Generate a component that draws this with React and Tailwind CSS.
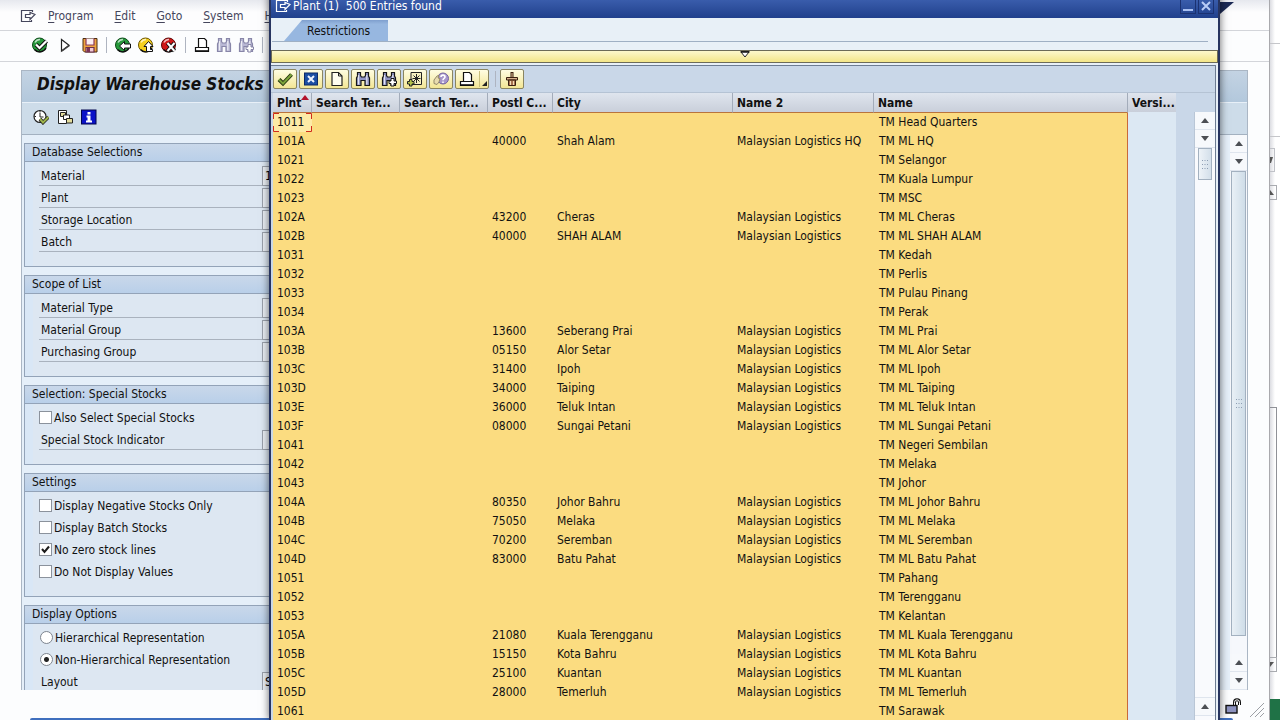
import clsx from 'clsx'

const plants = [
  ['1011', '', '', '', 'TM Head Quarters'],
  ['101A', '40000', 'Shah Alam', 'Malaysian Logistics HQ', 'TM ML HQ'],
  ['1021', '', '', '', 'TM Selangor'],
  ['1022', '', '', '', 'TM Kuala Lumpur'],
  ['1023', '', '', '', 'TM MSC'],
  ['102A', '43200', 'Cheras', 'Malaysian Logistics', 'TM ML Cheras'],
  ['102B', '40000', 'SHAH ALAM', 'Malaysian Logistics', 'TM ML SHAH ALAM'],
  ['1031', '', '', '', 'TM Kedah'],
  ['1032', '', '', '', 'TM Perlis'],
  ['1033', '', '', '', 'TM Pulau Pinang'],
  ['1034', '', '', '', 'TM Perak'],
  ['103A', '13600', 'Seberang Prai', 'Malaysian Logistics', 'TM ML Prai'],
  ['103B', '05150', 'Alor Setar', 'Malaysian Logistics', 'TM ML Alor Setar'],
  ['103C', '31400', 'Ipoh', 'Malaysian Logistics', 'TM ML Ipoh'],
  ['103D', '34000', 'Taiping', 'Malaysian Logistics', 'TM ML Taiping'],
  ['103E', '36000', 'Teluk Intan', 'Malaysian Logistics', 'TM ML Teluk Intan'],
  ['103F', '08000', 'Sungai Petani', 'Malaysian Logistics', 'TM ML Sungai Petani'],
  ['1041', '', '', '', 'TM Negeri Sembilan'],
  ['1042', '', '', '', 'TM Melaka'],
  ['1043', '', '', '', 'TM Johor'],
  ['104A', '80350', 'Johor Bahru', 'Malaysian Logistics', 'TM ML Johor Bahru'],
  ['104B', '75050', 'Melaka', 'Malaysian Logistics', 'TM ML Melaka'],
  ['104C', '70200', 'Seremban', 'Malaysian Logistics', 'TM ML Seremban'],
  ['104D', '83000', 'Batu Pahat', 'Malaysian Logistics', 'TM ML Batu Pahat'],
  ['1051', '', '', '', 'TM Pahang'],
  ['1052', '', '', '', 'TM Terengganu'],
  ['1053', '', '', '', 'TM Kelantan'],
  ['105A', '21080', 'Kuala Terengganu', 'Malaysian Logistics', 'TM ML Kuala Terengganu'],
  ['105B', '15150', 'Kota Bahru', 'Malaysian Logistics', 'TM ML Kota Bahru'],
  ['105C', '25100', 'Kuantan', 'Malaysian Logistics', 'TM ML Kuantan'],
  ['105D', '28000', 'Temerluh', 'Malaysian Logistics', 'TM ML Temerluh'],
  ['1061', '', '', '', 'TM Sarawak'],
]

const columns = [
  { title: 'Plnt', width: 'w-[39px]', sorted: true },
  { title: 'Search Ter...', width: 'w-[88px]' },
  { title: 'Search Ter...', width: 'w-[88px]' },
  { title: 'Postl C...', width: 'w-[65px]' },
  { title: 'City', width: 'w-[180px]' },
  { title: 'Name 2', width: 'w-[141px]' },
  { title: 'Name', width: '' },
  { title: 'Versi...', width: 'w-[48px]' },
]

function Icon({ children, className = 'size-4' }) {
  return (
    <svg viewBox="0 0 16 16" className={clsx('shrink-0', className)} aria-hidden="true">
      {children}
    </svg>
  )
}

function Ball({ color, dark, children }) {
  return (
    <Icon>
      <circle cx="7.5" cy="8" r="7" fill={color} stroke={dark} strokeWidth="1" />
      <path d="M3 5.5A5.5 5.5 0 0 1 8 2.5" fill="none" stroke="#fff" strokeOpacity=".7" strokeWidth="1.5" />
      <path d="M2.5 12.5A7 7 0 0 0 14 11" fill="none" stroke="#111" strokeWidth="1.4" />
      {children}
    </Icon>
  )
}

function EnterIcon() {
  return (
    <Ball color="#279a3c" dark="#0c4a18">
      <path d="M4 7.5L7.5 11L14.5 4" fill="none" stroke="#111" strokeWidth="4.2" />
      <path d="M4 7.5L7.5 11L14.5 4" fill="none" stroke="#fff" strokeWidth="2.2" />
    </Ball>
  )
}

function BackIcon() {
  return (
    <Ball color="#279a3c" dark="#0c4a18">
      <path d="M4.5 9L9.5 4.5V7H15.5V11H9.5V13.5Z" fill="#fff" stroke="#111" />
    </Ball>
  )
}

function ExitIcon() {
  return (
    <Ball color="#f5cf1e" dark="#6b5500">
      <path d="M10.5 4.5L15 9.5H12.5V12.5H14.5V14.5H8.5V9.5H6Z" fill="#fff" stroke="#111" />
    </Ball>
  )
}

function CancelIcon() {
  return (
    <Ball color="#d01818" dark="#5c0606">
      <path d="M6.5 6L13.5 14M13.5 6L6.5 14" stroke="#111" strokeWidth="4" />
      <path d="M6.5 6L13.5 14M13.5 6L6.5 14" stroke="#fff" strokeWidth="2" />
    </Ball>
  )
}

function PlayIcon() {
  return (
    <Icon>
      <path d="M4.5 2.5V14L12 8.2Z" fill="#fff" stroke="#222" strokeWidth="1.2" />
      <path d="M5 14L12.5 8.5" stroke="#444" strokeWidth="1.4" />
    </Icon>
  )
}

function SaveIcon() {
  return (
    <Icon>
      <path d="M1 1.5H15V15H2.5L1 13.5Z" fill="#eda33e" stroke="#4a2c12" />
      <path d="M4 1.5V8H12V1.5" fill="#fbeef2" stroke="#8b3a5a" strokeWidth="1.2" />
      <path d="M4 15V10.5H12V15Z" fill="#f0c9d4" stroke="#6d2f4a" strokeWidth="1.2" />
      <rect x="5" y="11" width="3" height="4" fill="#7d3355" />
    </Icon>
  )
}

function PrintIcon() {
  return (
    <Icon>
      <path d="M4.5 1.5H10.5L12.5 3.5V10.5H4.5Z" fill="#fff" stroke="#111" strokeWidth="1.2" />
      <path d="M1.5 10.5H14.5V14.5H1.5Z" fill="#fff" stroke="#111" strokeWidth="1.2" />
      <path d="M2 14H14.5" stroke="#111" strokeWidth="1.6" />
    </Icon>
  )
}

function FindIcon({ plus, muted }) {
  const line = muted ? '#8886a8' : '#161616'
  const fill = muted ? '#b9b8d4' : '#8f93c4'
  return (
    <Icon>
      <path
        d="M2.5 1.5H5.5V4.5L6.5 6H9.5L10.5 4.5V1.5H13.5V5L14.5 7V14.5H10V9.5H6V14.5H1.5V7L2.5 5Z"
        fill={fill}
        stroke={line}
        strokeWidth="1.2"
      />
      <path d="M3.5 4V13.5M11.8 4V13.5" stroke="#fff" strokeOpacity=".75" strokeWidth="1.2" />
      {plus && <path d="M10 7.5H13V10H15.5V12.5H13V15H10V12.5H8V10H10Z" fill="#fff" stroke={line} />}
    </Icon>
  )
}

function ExecuteIcon() {
  return (
    <Icon>
      <circle cx="7" cy="7.5" r="6" fill="#fff" stroke="#222" strokeWidth="1.2" />
      <path d="M7 3.5V8H10.5M7 1.5V3M1.5 7.5H3M7 12V13.5" stroke="#222" fill="none" />
      <path d="M7 10L10 13.5L15.5 8" fill="none" stroke="#222" strokeWidth="3.6" />
      <path d="M7 10L10 13.5L15.5 8" fill="none" stroke="#9db34a" strokeWidth="2" />
    </Icon>
  )
}

function VariantIcon() {
  return (
    <Icon>
      <path d="M1.5 1.5H9.5V14.5H1.5Z" fill="#fff" stroke="#222" />
      <path d="M3.5 3.5H8.5V7.5H3.5Z" fill="#e4dd9c" stroke="#222" />
      <path d="M6.5 6H12.5V10.5H6.5Z" fill="#fff" stroke="#222" />
      <path d="M9.5 9.5H15.5V14H9.5Z" fill="#e4dd9c" stroke="#222" />
    </Icon>
  )
}

function InfoIcon() {
  return (
    <Icon>
      <rect x="0.5" y="1" width="14.5" height="14" fill="#0b12c8" stroke="#02044e" />
      <path d="M6.5 3H9.5V5.5H6.5ZM5.5 6.5H9.5V11.5H11V13.5H5V11.5H6.5V8.5H5.5Z" fill="#fff" />
    </Icon>
  )
}

function TickIcon() {
  return (
    <Icon>
      <path d="M2 8.5L6 12.5L14.5 3.5" fill="none" stroke="#26360f" strokeWidth="4" />
      <path d="M2 8.5L6 12.5L14.5 3.5" fill="none" stroke="#7ba23a" strokeWidth="2" />
    </Icon>
  )
}

function CloseBoxIcon() {
  return (
    <Icon>
      <rect x="1.5" y="2" width="13" height="12" fill="#1c4fa3" stroke="#0d2a66" />
      <path d="M5 5L11 11M11 5L5 11" stroke="#eef4ff" strokeWidth="2" />
    </Icon>
  )
}

function PageIcon() {
  return (
    <Icon>
      <path d="M3 1.5H9.5L13 5V14.5H3Z" fill="#fffdf0" stroke="#222" strokeWidth="1.2" />
      <path d="M9.5 1.5V5H13" fill="none" stroke="#222" />
    </Icon>
  )
}

function MultiSelectIcon() {
  return (
    <Icon>
      <path d="M4 1.5H14.5V13.5H4Z" fill="#f6f0c0" stroke="#222" />
      <path d="M9.5 3V12M5.5 7.5H13.5M6.5 4.5L12.5 10.5M12.5 4.5L6.5 10.5" stroke="#222" />
      <path d="M2.5 8.5H5V10.5H7V13H5V15H2.5V13H0.5V10.5H2.5Z" fill="#b4c24c" stroke="#222" />
    </Icon>
  )
}

function HelpIcon() {
  return (
    <Icon>
      <circle cx="10" cy="7.5" r="5.5" fill="#a796cc" stroke="#7464a0" />
      <path d="M8 6C8 3.5 12 3.5 12 6C12 7.5 10 7.5 10 9.3M10 10.5V12" fill="none" stroke="#fff" strokeWidth="1.6" />
      <path d="M1 9L4 5L6 4.5L5 7L7 7.5L6 11L4 13.5L1 12.5Z" fill="#e9dcae" stroke="#948a68" />
    </Icon>
  )
}

function HoldIcon() {
  return (
    <Icon>
      <path d="M8 1V6" stroke="#3a2010" strokeWidth="3" />
      <path d="M8 2V6" stroke="#e8c49c" />
      <path d="M2.5 6.5H13.5V9H2.5Z" fill="#d8b18c" stroke="#3a2010" />
      <path d="M4.5 9H11.5V14.5H4.5Z" fill="#a87450" stroke="#3a2010" />
      <path d="M6.5 10V14M9.5 10V14" stroke="#f3dcb8" />
    </Icon>
  )
}

function WindowIcon({ className }) {
  return (
    <Icon className={className}>
      <path d="M12.5 4V2.5H1.5V13.5H11.5V12" fill="none" stroke="currentColor" strokeWidth="1.2" />
      <path d="M5.5 9.5V6.5H10V4.5L15 6.5L10 11.5V9.5Z" fill="none" stroke="currentColor" strokeWidth="1.2" />
    </Icon>
  )
}

function LockIcon() {
  return (
    <Icon>
      <path d="M9.5 8V4.5Q9.5 1.8 12 1.8Q14.5 1.8 14.5 4.5V7" fill="none" stroke="#111" strokeWidth="3" />
      <path d="M9.5 8V4.5Q9.5 1.8 12 1.8Q14.5 1.8 14.5 4.5V7" fill="none" stroke="#fff" strokeWidth="1" />
      <rect x="1" y="7.5" width="11" height="7.5" fill="#8d93c0" stroke="#111" strokeWidth="1.4" />
    </Icon>
  )
}

function ToolButton({ label, children }) {
  return (
    <button type="button" aria-label={label} className="flex size-4 items-center justify-center">
      {children}
    </button>
  )
}

function DialogButton({ label, wide, children }) {
  return (
    <button
      type="button"
      aria-label={label}
      className={clsx(
        'flex h-5 items-center rounded-xs border border-[#8a8560] bg-linear-to-b from-[#fffde2] to-[#f3e694]',
        wide ? 'w-[34px] pl-[3px]' : 'w-6 justify-center'
      )}
    >
      {children}
    </button>
  )
}

function Separator({ className }) {
  return <span className={clsx('h-4 w-px bg-[#aeb4c0]', className)} />
}

function ArrowButton({ label, down }) {
  return (
    <button type="button" aria-label={label} className="flex h-[18px] w-full shrink-0 items-center justify-center border-b border-[#dfe5ee] bg-[#f7f9fc]">
      <svg viewBox="0 0 10 5" className="h-[5px] w-2.5" aria-hidden="true">
        <path d={down ? 'M1 0H9L5 5Z' : 'M1 5H9L5 0Z'} fill="#4c4f54" />
      </svg>
    </button>
  )
}

function Grip() {
  return (
    <svg viewBox="0 0 6 9" className="h-[9px] w-1.5" aria-hidden="true">
      <path d="M0 .5H6M0 4.5H6M0 8.5H6" stroke="#8d9db3" strokeDasharray="1 1.5" />
    </svg>
  )
}

function Group({ title, children }) {
  return (
    <section className="border border-[#93a3b8] bg-[#dde7f2]">
      <h2 className="h-[18px] border-b border-[#93a3b8] bg-linear-to-b from-[#c9d8ea] to-[#b9cfe9] pl-[7px] leading-4">{title}</h2>
      <div className="border-l-8 border-[#d9e7f6] pt-0.5 pb-3.5 pl-1.5">{children}</div>
    </section>
  )
}

function FieldRow({ id, label, value = '' }) {
  return (
    <div className="flex h-[22px] items-end">
      <label htmlFor={id} className="h-[21px] w-[223px] shrink-0 border-b border-[#a9b2be] pl-0.5 leading-[22px]">
        {label}
      </label>
      <input
        id={id}
        defaultValue={value}
        className="h-5 w-40 border border-[#9aa1ab] bg-[#eaeff5] pl-0.5 text-black outline-none"
      />
    </div>
  )
}

function CheckRow({ label, checked }) {
  return (
    <label className="flex h-[22px] items-center gap-0.5 pt-px">
      <span className="relative flex">
        <input type="checkbox" defaultChecked={checked} className="peer size-[13px] appearance-none border border-[#8b929c] bg-white" />
        <svg viewBox="0 0 13 13" className="pointer-events-none absolute inset-0 hidden size-[13px] peer-checked:block" aria-hidden="true">
          <path d="M3 6L5.5 9L10 3.5" fill="none" stroke="#1c1c1c" strokeWidth="2" />
        </svg>
      </span>
      {label}
    </label>
  )
}

function RadioRow({ label, checked }) {
  return (
    <label className="flex h-[22px] items-center gap-0.5 pt-px pl-px">
      <input
        type="radio"
        name="representation"
        defaultChecked={checked}
        className="size-[13px] appearance-none rounded-full border border-[#7d848e] bg-white checked:bg-[radial-gradient(circle,#222_2px,white_3px)]"
      />
      {label}
    </label>
  )
}

function MenuItem({ label }) {
  return (
    <button type="button">
      <u className="underline-offset-2">{label[0]}</u>
      {label.slice(1)}
    </button>
  )
}

function MainWindow() {
  return (
    <main className="flex min-w-0 flex-1 flex-col bg-[#fcfdfe]">
      <nav className="flex h-[31px] shrink-0 items-center gap-[21px] border-b border-[#d3d5da] bg-linear-to-b from-[#e6e8ee] to-[#fdfdfe] to-40% pt-0.5 pl-5 text-[#45465c]">
        <WindowIcon className="-mr-[9px] size-4" />
        <MenuItem label="Program" />
        <MenuItem label="Edit" />
        <MenuItem label="Goto" />
        <MenuItem label="System" />
        <MenuItem label="Help" />
        <svg viewBox="0 0 20 14" className="mr-8 ml-auto h-3.5 w-5 self-start" aria-hidden="true">
          <path d="M0 0H17L3 12H0Z" fill="#1c2a55" />
        </svg>
      </nav>
      <div className="flex h-[31px] shrink-0 items-center border-b border-[#d3d5da] pb-0.5 pl-8">
        <div className="flex gap-[9px]">
          <ToolButton label="Enter"><EnterIcon /></ToolButton>
          <ToolButton label="Run"><PlayIcon /></ToolButton>
          <ToolButton label="Save"><SaveIcon /></ToolButton>
        </div>
        <Separator className="mx-2" />
        <div className="flex gap-[7px]">
          <ToolButton label="Back"><BackIcon /></ToolButton>
          <ToolButton label="Exit"><ExitIcon /></ToolButton>
          <ToolButton label="Cancel"><CancelIcon /></ToolButton>
        </div>
        <Separator className="mx-2" />
        <div className="flex gap-1.5">
          <ToolButton label="Print"><PrintIcon /></ToolButton>
          <ToolButton label="Find"><FindIcon muted /></ToolButton>
          <ToolButton label="Find next"><FindIcon muted plus /></ToolButton>
        </div>
        <Separator className="mx-2" />
      </div>

      <div className="mx-[21px] mt-2 flex min-h-0 flex-1 flex-col border-x border-t border-[#aab6c4] bg-[#e5eff9]">
        <h1 className="h-8 shrink-0 border-b border-[#e8f0f8] bg-linear-to-b from-[#c3d3e3] to-[#b3c8dc] pl-[15px] text-[17px] leading-[27px] font-bold whitespace-nowrap italic">
          Display Warehouse Stocks
        </h1>
        <div className="flex h-8 shrink-0 items-center gap-2 border-b border-[#a3b1c0] bg-[#cddce9] pb-1 pl-[11px]">
          <ToolButton label="Execute"><ExecuteIcon /></ToolButton>
          <ToolButton label="Get variant"><VariantIcon /></ToolButton>
          <ToolButton label="Information"><InfoIcon /></ToolButton>
        </div>
        <div className="flex min-h-0 flex-1">
          <form className="mr-5 flex min-w-0 flex-1 flex-col gap-2 overflow-hidden pt-2 pl-0.5">
            <Group title="Database Selections">
              <FieldRow id="material" label="Material" value="1" />
              <FieldRow id="plant" label="Plant" />
              <FieldRow id="storage" label="Storage Location" />
              <FieldRow id="batch" label="Batch" />
            </Group>
            <Group title="Scope of List">
              <FieldRow id="type" label="Material Type" />
              <FieldRow id="group" label="Material Group" />
              <FieldRow id="purchasing" label="Purchasing Group" />
            </Group>
            <Group title="Selection: Special Stocks">
              <CheckRow label="Also Select Special Stocks" />
              <FieldRow id="indicator" label="Special Stock Indicator" />
            </Group>
            <Group title="Settings">
              <CheckRow label="Display Negative Stocks Only" />
              <CheckRow label="Display Batch Stocks" />
              <CheckRow label="No zero stock lines" checked />
              <CheckRow label="Do Not Display Values" />
            </Group>
            <Group title="Display Options">
              <RadioRow label="Hierarchical Representation" />
              <RadioRow label="Non-Hierarchical Representation" checked />
              <FieldRow id="layout" label="Layout" value="S" />
            </Group>
          </form>
          <div className="flex w-[17px] shrink-0 flex-col bg-[#f6f8fc]">
            <ArrowButton label="Scroll up" />
            <ArrowButton label="Scroll down" down />
            <div className="mx-px flex flex-1 items-center justify-center border border-[#a3b1c0] bg-linear-to-r from-[#e9f0f6] to-[#cfdde8]">
              <Grip />
            </div>
            <div className="h-[18px]" />
            <ArrowButton label="Scroll up" />
            <ArrowButton label="Scroll down" down />
          </div>
        </div>
      </div>

      <footer className="flex h-[30px] shrink-0 flex-col justify-between pl-[30px]">
        <div className="flex items-center justify-end gap-2 pt-1 pr-1">
          <LockIcon />
          <svg viewBox="0 0 16 16" className="mt-2 size-4" aria-hidden="true">
            <path d="M1 15L15 1M6 15L15 6M11 15L15 11" stroke="#9da0a6" />
          </svg>
        </div>
        <div className="mr-9 h-0.5 shrink-0 rounded-t-full bg-[#3f6fbe]" />
      </footer>
    </main>
  )
}

function SideWindow() {
  return (
    <aside className="flex w-[11px] shrink-0 flex-col border-l border-[#a9a9ad] bg-linear-to-r from-[#dcdde2] to-white to-50%">
      <div className="h-11 border-b border-[#c5c6ca]" />
      <div className="h-[93px] border-b border-[#c5c6ca]" />
      <div className="mt-[11px] mr-[5px] flex h-6 items-center border border-l-0 border-[#c0c2c8]">
        <svg viewBox="0 0 4 6" className="h-1.5 w-1" aria-hidden="true"><path d="M0 0H3L1 6H0Z" fill="#555" /></svg>
      </div>
      <div className="mt-[13px] mr-[3px] h-[15px] border border-l-0 border-[#a9abb0] pt-1">
        <svg viewBox="0 0 4 5" className="h-[5px] w-1" aria-hidden="true"><path d="M0 0L4 5H0Z" fill="#555" /></svg>
      </div>
      <div className="mt-[207px] mr-[3px] flex-1 border-t border-r border-[#8f9197]" />
      <div className="mr-[3px] h-[15px] border border-l-0 border-[#a9abb0] pt-1">
        <svg viewBox="0 0 4 5" className="h-[5px] w-1" aria-hidden="true"><path d="M0 0H4L0 5Z" fill="#555" /></svg>
      </div>
      <div className="mt-[27px] h-[21px] shrink-0 bg-[#1f7246]" />
    </aside>
  )
}

function PlantTable() {
  return (
    <table className="w-full table-fixed border-separate border-spacing-0 text-left whitespace-nowrap">
      <thead>
        <tr className="h-5">
          {columns.map((col, i) => (
            <th
              key={i}
              className={clsx(
                'relative overflow-hidden border-b bg-linear-to-b from-[#dfe5ee] to-[#c9cfda] p-0 pl-1 leading-[18px] font-bold',
                i < 7 ? 'border-r border-r-[#a3acba] border-b-[#b9743c]' : 'border-b-[#dce8f3]',
                col.width
              )}
            >
              {col.title}
              {col.sorted && (
                <svg viewBox="0 0 8 5" className="absolute top-0.5 right-0.5 h-[5px] w-2" aria-hidden="true">
                  <path d="M0 5H8L4 0Z" fill="#b3122a" />
                </svg>
              )}
            </th>
          ))}
        </tr>
      </thead>
      <tbody>
        {plants.map(([id, postal, city, name2, name], i) => (
          <tr key={id} className="h-[19px] bg-[#fbdc80] align-top leading-[18px]">
            <td className={clsx('relative p-0 pl-1', i === 0 && 'bg-[#fdeaa6]')}>
              {id}
              {i === 0 && (
                <svg viewBox="0 0 39 19" className="absolute inset-0 h-[19px] w-[39px]" aria-hidden="true">
                  <path d="M6 .5H.5V6M33 .5H38.5V6M.5 13V18.5H6M38.5 13V18.5H33" fill="none" stroke="#d02a1c" />
                </svg>
              )}
            </td>
            <td />
            <td />
            <td className="p-0 pl-1">{postal}</td>
            <td className="p-0 pl-1">{city}</td>
            <td className="p-0 pl-1">{name2}</td>
            <td className="border-r border-[#c9683a] p-0 pl-[5px]">{name}</td>
            <td className="bg-[#dce8f3]" />
          </tr>
        ))}
      </tbody>
    </table>
  )
}

function PlantDialog() {
  return (
    <section
      role="dialog"
      aria-label="Plant (1)"
      className="absolute top-[-7px] right-[60px] bottom-0 left-[269px] flex flex-col overflow-hidden border-x-2 border-[#27345f] bg-[#e8f0f7] shadow-[0_0_8px_rgba(0,0,0,0.6)]"
    >
      <header className="flex h-[25px] shrink-0 items-center bg-linear-to-b from-[#4468b8] to-[#20408c] pl-1 text-white">
        <WindowIcon className="size-4" />
        <h2 className="ml-0.5 flex-1 whitespace-pre">{'Plant (1)  500 Entries found'}</h2>
        <button type="button" aria-label="Minimize" className="flex size-4 items-end justify-center border border-[#1b3272] pb-0.5">
          <span className="h-0.5 w-2.5 bg-[#a9c0f2]" />
        </button>
        <button type="button" aria-label="Close" className="mr-1 ml-0.5 flex size-4 items-center justify-center border border-[#1b3272]">
          <svg viewBox="0 0 10 10" className="size-2.5" aria-hidden="true">
            <path d="M1 1L9 9M9 1L1 9" stroke="#b9ccf6" strokeWidth="2" />
          </svg>
        </button>
      </header>

      <div className="mr-2.5 ml-px flex h-6 shrink-0 items-end border-b border-[#9fb0c4] pl-3">
        <button
          type="button"
          className="h-[21px] w-[104px] bg-linear-to-b from-[#7f9fce] to-[#97b7e0] to-20% pl-[23px] text-left leading-5 [clip-path:polygon(18px_0,100%_0,100%_100%,0_100%)]"
        >
          Restrictions
        </button>
      </div>

      <button type="button" aria-label="Expand restrictions" className="mt-2 flex h-[13px] shrink-0 items-start justify-center border border-[#6c6b58] bg-linear-to-b from-[#fdf8cc] to-[#f3e587]">
        <svg viewBox="0 0 10 8" className="h-2 w-2.5" aria-hidden="true">
          <path d="M1 1H9L5 6Z" fill="#fff" stroke="#222" />
          <path d="M.5 .8H9.5" stroke="#111" strokeWidth="1.4" />
        </svg>
      </button>

      <div className="mt-0.5 mr-0.5 flex min-h-0 flex-1 flex-col border-t border-r border-[#6d7c92] bg-[#c9d7e8]">
        <div className="flex h-[27px] shrink-0 items-center gap-0.5 border-b border-[#b5c3d4] pl-0.5">
          <DialogButton label="Copy"><TickIcon /></DialogButton>
          <DialogButton label="Close"><CloseBoxIcon /></DialogButton>
          <DialogButton label="New values"><PageIcon /></DialogButton>
          <DialogButton label="Find"><FindIcon /></DialogButton>
          <DialogButton label="Find next"><FindIcon plus /></DialogButton>
          <DialogButton label="Personal list"><MultiSelectIcon /></DialogButton>
          <DialogButton label="Help"><HelpIcon /></DialogButton>
          <DialogButton label="Print" wide>
            <PrintIcon />
            <span className="ml-1 h-4 w-px bg-[#c9bf7c]" />
            <svg viewBox="0 0 5 5" className="mt-2 ml-0.5 size-[5px]" aria-hidden="true">
              <path d="M5 0V5H0Z" fill="#222" />
            </svg>
          </DialogButton>
          <Separator className="mr-0.5 ml-1" />
          <DialogButton label="Hold list"><HoldIcon /></DialogButton>
        </div>
        <div className="flex min-h-0 flex-1 overflow-hidden pl-0.5">
          <div className="min-w-0 flex-1">
            <PlantTable />
          </div>
          <div className="mt-[19px] ml-[18px] flex w-[21px] shrink-0 flex-col border-l border-[#b9c6d6] bg-[#f9fafd]">
            <ArrowButton label="Scroll up" />
            <ArrowButton label="Scroll down" down />
            <div className="mx-[3px] flex h-8 shrink-0 items-center justify-center border border-[#a3b1c0] bg-linear-to-r from-[#eef3f8] to-[#d3dfea]">
              <Grip />
            </div>
            <div className="flex-1 border-b border-[#dfe5ee]" />
            <ArrowButton label="Scroll up" />
            <div className="h-1 shrink-0" />
          </div>
        </div>
      </div>
    </section>
  )
}

export default function App() {
  return (
    <div className="relative flex h-screen overflow-hidden bg-white font-['DejaVu_Sans_Condensed','DejaVu_Sans',sans-serif] text-xs text-[#111]">
      <MainWindow />
      <SideWindow />
      <PlantDialog />
    </div>
  )
}
